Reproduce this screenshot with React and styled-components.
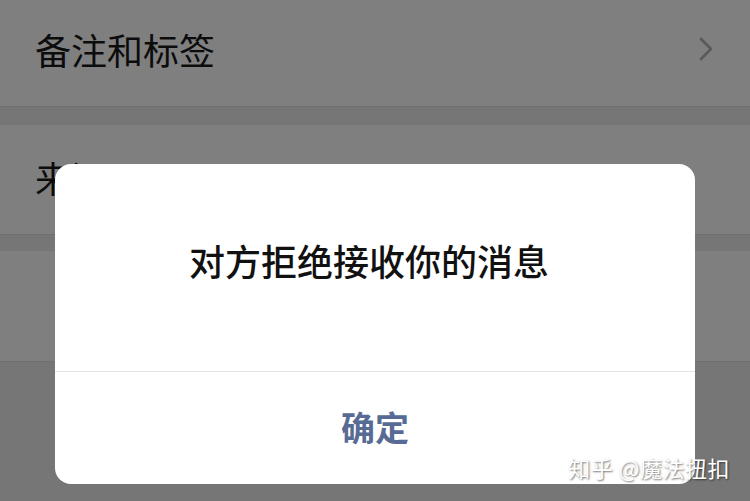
import React from "react";
import styled, { createGlobalStyle } from "styled-components";

const GlobalStyle = createGlobalStyle`
  html, body {
    margin: 0;
    padding: 0;
    background: #ededed;
    font-family: "Noto Sans CJK SC", "Noto Sans", sans-serif;
  }
`;

const Page = styled.div`
  width: 750px;
  height: 501px;
  overflow: hidden;
  position: relative;
  background: #ededed;
`;

const Group = styled.div`
  background: #ffffff;
  margin-bottom: ${(p) => p.gap || 0}px;
  border-bottom: 1px solid #e0e0e0;
`;

const Row = styled.div`
  height: ${(p) => p.h}px;
  display: flex;
  align-items: center;
  justify-content: space-between;
  padding: 0 36px ${(p) => p.lift || 0}px 35px;
  font-size: 36px;
  color: #191919;
  box-sizing: border-box;
`;

const Chevron = () => (
  <svg width="16" height="26" viewBox="0 0 16 26">
    <path d="M3 3 L13 13 L3 23" fill="none" stroke="#b2b2b2" strokeWidth="2.6" strokeLinecap="round" strokeLinejoin="round" />
  </svg>
);

const Overlay = styled.div`
  position: absolute;
  inset: 0;
  background: rgba(0, 0, 0, 0.5);
  display: flex;
  justify-content: center;
  padding-top: 164px;
  box-sizing: border-box;
`;

const Dialog = styled.div`
  width: 640px;
  height: 320px;
  background: #ffffff;
  border-radius: 16px;
  display: flex;
  flex-direction: column;
  overflow: hidden;
`;

const Message = styled.div`
  height: 208px;
  display: flex;
  align-items: center;
  justify-content: center;
  padding: 0 12px 16px 0;
  box-sizing: border-box;
  font-size: 36px;
  font-weight: 500;
  color: #111111;
  border-bottom: 1px solid #e5e5e5;
`;

const Action = styled.div`
  flex: 1;
  display: flex;
  align-items: center;
  justify-content: center;
  padding-bottom: 4px;
  font-size: 34px;
  font-weight: 700;
  color: #576b95;
`;

const Watermark = styled.div`
  position: absolute;
  right: 20px;
  bottom: 18px;
  font-size: 22px;
  color: #ffffff;
  letter-spacing: 0.5px;
  text-shadow: 1px 1px 2px rgba(0, 0, 0, 0.55);
`;

export default function App() {
  return (
    <Page>
      <GlobalStyle />
      <Group gap={18}>
        <Row h={106} lift={8}>
          <span>备注和标签</span>
          <Chevron />
        </Row>
      </Group>
      <Group gap={16}>
        <Row h={109} lift={6}>
          <span>来源</span>
        </Row>
      </Group>
      <Group>
        <Row h={110} />
      </Group>
      <Overlay>
        <Dialog>
          <Message>对方拒绝接收你的消息</Message>
          <Action>确定</Action>
        </Dialog>
      </Overlay>
      <Watermark>知乎 @魔法扭扣</Watermark>
    </Page>
  );
}
